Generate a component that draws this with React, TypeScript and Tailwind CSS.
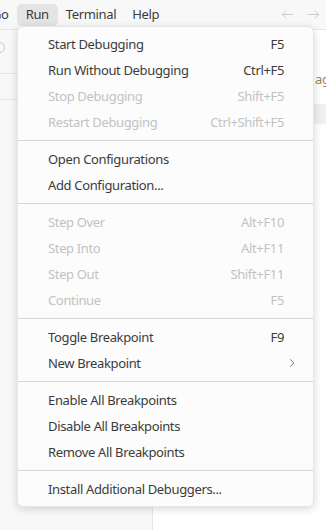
import React from "react";

type Item =
  | { sep: true }
  | { label: string; key?: string; disabled?: boolean; sub?: boolean; sep?: false };

const items: Item[] = [
  { label: "Start Debugging", key: "F5" },
  { label: "Run Without Debugging", key: "Ctrl+F5" },
  { label: "Stop Debugging", key: "Shift+F5", disabled: true },
  { label: "Restart Debugging", key: "Ctrl+Shift+F5", disabled: true },
  { sep: true },
  { label: "Open Configurations" },
  { label: "Add Configuration..." },
  { sep: true },
  { label: "Step Over", key: "Alt+F10", disabled: true },
  { label: "Step Into", key: "Alt+F11", disabled: true },
  { label: "Step Out", key: "Shift+F11", disabled: true },
  { label: "Continue", key: "F5", disabled: true },
  { sep: true },
  { label: "Toggle Breakpoint", key: "F9" },
  { label: "New Breakpoint", sub: true },
  { sep: true },
  { label: "Enable All Breakpoints" },
  { label: "Disable All Breakpoints" },
  { label: "Remove All Breakpoints" },
  { sep: true },
  { label: "Install Additional Debuggers..." },
];

export default function App() {
  return (
    <div
      className="relative w-[326px] h-[530px] overflow-hidden bg-white text-[13px] tracking-[-0.35px] text-[#3b3b3b]"
      style={{ fontFamily: '"Noto Sans", "Open Sans", sans-serif' }}
    >
      {/* menubar */}
      <div className="flex h-[30px] items-center bg-[#f8f8f8] border-b border-[#e5e5e5]">
        <div className="flex h-full items-center">
          <div className="ml-[-16px] flex h-[22px] items-center rounded px-2 pt-px">Go</div>
          <div className="flex h-[22px] items-center rounded-[5px] bg-[#e4e4e4] px-[9px] pt-px">Run</div>
          <div className="flex h-[22px] items-center rounded px-2 pt-px">Terminal</div>
          <div className="flex h-[22px] items-center rounded px-2 pt-px">Help</div>
        </div>
        <div className="ml-auto mr-[6px] flex items-center gap-[13px] text-[#c4c4c4]">
          <svg width="13" height="13" viewBox="0 0 16 16" fill="none" stroke="currentColor" strokeWidth="1.1">
            <path d="M14.5 8H1.5M6.5 3L1.5 8l5 5" />
          </svg>
          <svg width="13" height="13" viewBox="0 0 16 16" fill="none" stroke="currentColor" strokeWidth="1.1">
            <path d="M1.5 8h13M9.5 3l5 5-5 5" />
          </svg>
        </div>
      </div>

      {/* body */}
      <div className="flex h-[500px]">
        <div className="w-[153px] shrink-0 border-r border-[#e5e5e5] bg-[#f8f8f8]">
          <div className="h-[44px] border-b border-[#e5e5e5] relative">
            <div className="absolute left-[-6px] top-[12px] h-[11px] w-[11px] rounded-full border border-[#c8c8c8]" />
          </div>
          <div className="h-[26px] border-b border-[#e5e5e5]" />
        </div>
        <div className="min-w-0 flex-1 overflow-hidden bg-white">
          <div className="mt-[40px] whitespace-nowrap pl-[162px] text-[#a0845a]">ag</div>
          <div className="mt-[14px] h-[20px] bg-[#f0f0f0]" />
        </div>
      </div>

      {/* dropdown menu */}
      <div className="absolute left-[17px] top-[26px] w-[297px] rounded-[6px] border border-[#e6e6e6] bg-[#fcfcfd] py-[4px] shadow-[0_2px_8px_rgba(0,0,0,0.16)]">
        {items.map((it, i) =>
          it.sep ? (
            <div key={i} className="my-[5px] h-px bg-[#d6d6d6]" />
          ) : (
            <div
              key={i}
              className={
                "relative flex h-[26px] items-center pl-[30px] pr-[29px] pt-[2px] " +
                (it.disabled ? "text-[#c2c2c2]" : "text-[#3b3b3b]")
              }
            >
              <span className="flex-1 whitespace-nowrap">{it.label}</span>
              {it.key && <span className="whitespace-nowrap">{it.key}</span>}
              {it.sub && (
                <svg
                  className="absolute right-[16px] top-[8px]"
                  width="10"
                  height="10"
                  viewBox="0 0 16 16"
                  fill="none"
                  stroke="#5a5a5a"
                  strokeWidth="1.3"
                >
                  <path d="M5 2l6 6-6 6" />
                </svg>
              )}
            </div>
          )
        )}
      </div>
    </div>
  );
}
